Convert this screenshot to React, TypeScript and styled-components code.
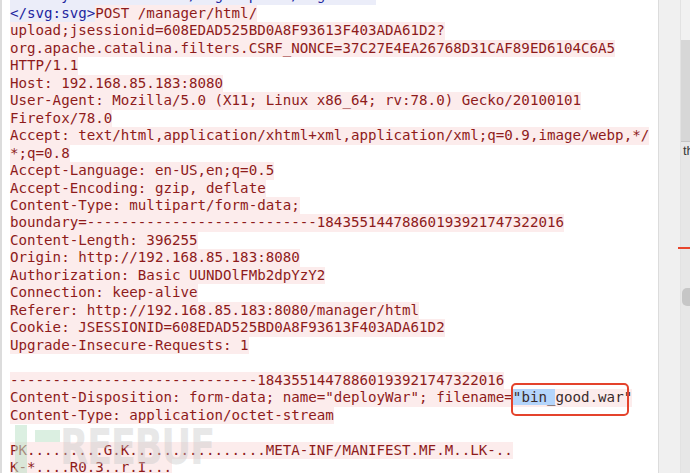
import React from "react";
import styled, { createGlobalStyle } from "styled-components";

const LH = 17.47;

const GlobalStyle = createGlobalStyle`
  html, body { margin: 0; padding: 0; background: #fff; }
  body { width: 690px; height: 473px; overflow: hidden; }
`;

const Frame = styled.div`
  position: relative;
  display: flex;
  width: 690px;
  height: 473px;
  overflow: hidden;
  background: #fff;
`;

const CodePane = styled.div`
  position: relative;
  flex: 0 0 659px;
  box-sizing: border-box;
  border-left: 2px solid #dcdcdc;
  border-right: 1px solid #dcdcdc;
  padding-left: 8px;
  overflow: hidden;
`;

const Code = styled.div`
  margin-top: -12.64px;
  font-family: "DejaVu Sans Mono", "Liberation Mono", monospace;
  font-size: 14.17px;
  line-height: ${LH}px;
  white-space: pre;
`;

const Line = styled.div`
  height: ${LH}px;
`;

type Tone = "red" | "blue" | "file";

const Seg = styled.span<{ $tone: Tone }>`
  display: inline-block;
  vertical-align: top;
  height: ${LH}px;
  color: ${(p) => (p.$tone === "blue" ? "#22249e" : p.$tone === "file" ? "#3a2b2b" : "#8e1b1b")};
  background: ${(p) => (p.$tone === "blue" ? "#ebedf9" : "#fcecec")};
`;

const Marked = styled.span`
  position: relative;
  &::after {
    content: "";
    position: absolute;
    left: -2px;
    top: -6px;
    width: 118px;
    height: 33px;
    box-sizing: border-box;
    border: 2.5px solid #e4432c;
    border-radius: 5px;
  }
`;

const Selected = styled.span`
  background: #b4d5fb;
`;

const Gutter = styled.div`
  flex: 0 0 21px;
  background: #f0f0f0;
`;

const Side = styled.div`
  position: relative;
  flex: 0 0 10px;
  display: flex;
  flex-direction: column;
  border-left: 1px solid #e2e2e2;
  box-sizing: border-box;
`;

const SideTop = styled.div`
  height: 40px;
  background: #f1f1f1;
`;

const SideDark = styled.div`
  height: 101px;
  background: #d7d7d7;
  border-bottom: 1px solid #c4c4c4;
`;

const SideRest = styled.div`
  flex: 1;
  background: #e7e7e7;
  display: flex;
  flex-direction: column;
  padding-top: 1px;
`;

const SideLabel = styled.div`
  font-family: "Liberation Sans", Arial, sans-serif;
  font-size: 13px;
  line-height: 16px;
  color: #3a3a3a;
  padding-left: 2px;
  white-space: nowrap;
`;

const Thumb = styled.div`
  margin-top: 129px;
  margin-left: 1px;
  width: 10px;
  height: 18px;
  border-radius: 5px 0 0 5px;
  background: #c6c6c6;
`;

const RedMark = styled.div`
  position: absolute;
  left: 678px;
  top: 247px;
  width: 12px;
  height: 2px;
  background: #e8452c;
`;

const Watermark = styled.div`
  position: absolute;
  left: 15px;
  top: 425px;
  display: flex;
  align-items: flex-start;
  pointer-events: none;
`;

const MarkBar = styled.div`
  width: 12px;
  height: 50px;
  background: rgba(190, 225, 200, 0.55);
`;

const MarkBlock = styled.div`
  margin-left: 8px;
  margin-top: 5px;
  width: 25px;
  height: 12px;
  background: rgba(190, 225, 200, 0.55);
`;

const MarkText = styled.div`
  font-family: "DejaVu Sans", "Liberation Sans", sans-serif;
  font-weight: bold;
  font-size: 50px;
  line-height: 50px;
  letter-spacing: -2px;
  color: rgba(200, 200, 200, 0.42);
  transform: scaleX(0.74);
  transform-origin: left top;
  margin-top: -3px;
`;

type L = { t: Tone; s: string }[];

const lines: L[] = [
  [{ t: "blue", s: "      y=\"10.10.001\"></svg:tspan></svg:text>" }],
  [
    { t: "blue", s: "</svg:svg>" },
    { t: "red", s: "POST /manager/html/" },
  ],
  [{ t: "red", s: "upload;jsessionid=608EDAD525BD0A8F93613F403ADA61D2?" }],
  [{ t: "red", s: "org.apache.catalina.filters.CSRF_NONCE=37C27E4EA26768D31CAF89ED6104C6A5" }],
  [{ t: "red", s: "HTTP/1.1" }],
  [{ t: "red", s: "Host: 192.168.85.183:8080" }],
  [{ t: "red", s: "User-Agent: Mozilla/5.0 (X11; Linux x86_64; rv:78.0) Gecko/20100101" }],
  [{ t: "red", s: "Firefox/78.0" }],
  [{ t: "red", s: "Accept: text/html,application/xhtml+xml,application/xml;q=0.9,image/webp,*/" }],
  [{ t: "red", s: "*;q=0.8" }],
  [{ t: "red", s: "Accept-Language: en-US,en;q=0.5" }],
  [{ t: "red", s: "Accept-Encoding: gzip, deflate" }],
  [{ t: "red", s: "Content-Type: multipart/form-data;" }],
  [{ t: "red", s: "boundary=---------------------------18435514478860193921747322016" }],
  [{ t: "red", s: "Content-Length: 396255" }],
  [{ t: "red", s: "Origin: http://192.168.85.183:8080" }],
  [{ t: "red", s: "Authorization: Basic UUNDOlFMb2dpYzY2" }],
  [{ t: "red", s: "Connection: keep-alive" }],
  [{ t: "red", s: "Referer: http://192.168.85.183:8080/manager/html" }],
  [{ t: "red", s: "Cookie: JSESSIONID=608EDAD525BD0A8F93613F403ADA61D2" }],
  [{ t: "red", s: "Upgrade-Insecure-Requests: 1" }],
  [],
  [{ t: "red", s: "-----------------------------18435514478860193921747322016" }],
  [],
  [{ t: "red", s: "Content-Type: application/octet-stream" }],
  [],
  [{ t: "red", s: "PK.........G.K................META-INF/MANIFEST.MF.M..LK-.." }],
  [{ t: "red", s: "K-*....R0.3..r.I..." }],
];

export default function App() {
  return (
    <>
      <GlobalStyle />
      <Frame>
        <CodePane>
          <Code>
            {lines.map((segs, i) =>
              i === 23 ? (
                <Line key={i}>
                  <Seg $tone="red">{"Content-Disposition: form-data; name=\"deployWar\"; filename="}</Seg>
                  <Seg $tone="file">
                    <Marked>
                      <Selected>{"\"bin_"}</Selected>
                      {"good.war\""}
                    </Marked>
                  </Seg>
                </Line>
              ) : (
                <Line key={i}>
                  {segs.map((sg, j) => (
                    <Seg key={j} $tone={sg.t}>
                      {sg.s}
                    </Seg>
                  ))}
                </Line>
              )
            )}
          </Code>
        </CodePane>
        <Gutter />
        <Side>
          <SideTop />
          <SideDark />
          <SideRest>
            <SideLabel>th</SideLabel>
            <Thumb />
          </SideRest>
        </Side>
        <RedMark />
        <Watermark>
          <MarkBar />
          <MarkBlock />
          <MarkText>REEBUF</MarkText>
        </Watermark>
      </Frame>
    </>
  );
}
